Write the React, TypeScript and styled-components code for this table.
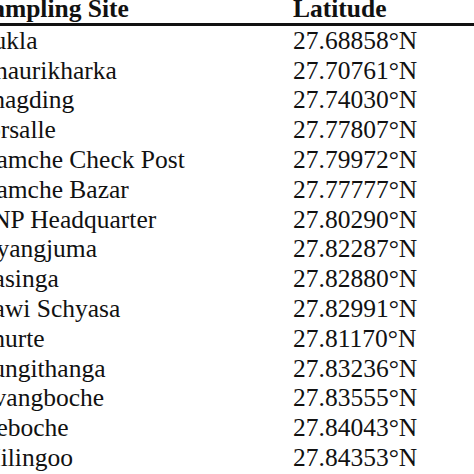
import React from "react";
import styled, { createGlobalStyle } from "styled-components";

const Global = createGlobalStyle`
  html, body {
    margin: 0;
    padding: 0;
    background: #ffffff;
    overflow: hidden;
  }
  #root {
    width: 474px;
    height: 474px;
    overflow: hidden;
  }
`;

const Table = styled.div`
  display: grid;
  grid-template-columns: 315px auto;
  margin-left: -22px;
  margin-top: -5px;
  width: 520px;
  font-family: "Liberation Serif", "Times New Roman", serif;
  font-size: 25.5px;
  line-height: 29.8px;
  color: #111111;
  white-space: nowrap;
`;

const HeadCell = styled.div`
  font-weight: 700;
  line-height: 27.8px;
  border-bottom: 3px solid #111111;
`;

const Cell = styled.div`
  font-weight: 400;
`;

const rows: [string, string][] = [
  ["Lukla", "27.68858"],
  ["Chaurikharka", "27.70761"],
  ["Phagding", "27.74030"],
  ["Jorsalle", "27.77807"],
  ["Namche Check Post", "27.79972"],
  ["Namche Bazar", "27.77777"],
  ["SNP Headquarter", "27.80290"],
  ["Kyangjuma", "27.82287"],
  ["Lasinga", "27.82880"],
  ["Lawi Schyasa", "27.82991"],
  ["Phurte", "27.81170"],
  ["Pungithanga", "27.83236"],
  ["Tvangboche", "27.83555"],
  ["Deboche", "27.84043"],
  ["Milingoo", "27.84353"],
];

export default function App() {
  return (
    <>
      <Global />
      <Table>
        <HeadCell>Sampling Site</HeadCell>
        <HeadCell>Latitude</HeadCell>
        {rows.map(([site, lat]) => (
          <React.Fragment key={site}>
            <Cell>{site}</Cell>
            <Cell>{lat}°N</Cell>
          </React.Fragment>
        ))}
      </Table>
    </>
  );
}
